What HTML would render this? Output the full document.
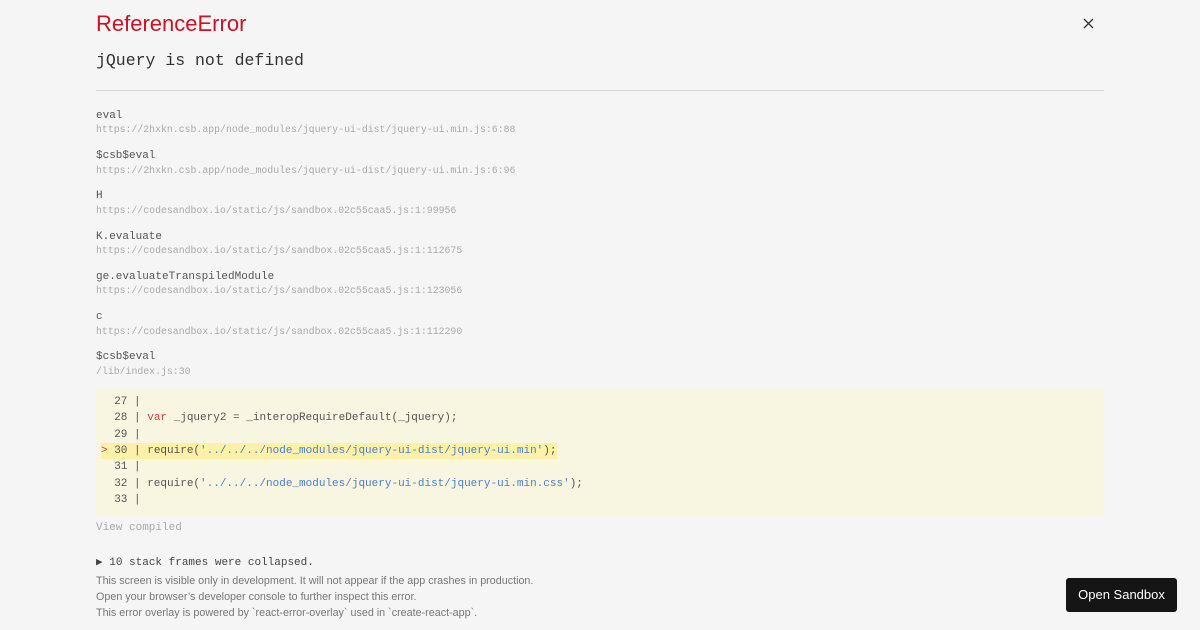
<!DOCTYPE html>
<html><head><meta charset="utf-8"><style>
*{margin:0;padding:0;box-sizing:border-box}
body{width:1200px;height:630px;background:#f5f5f5;font-family:"Liberation Sans",sans-serif;position:relative;overflow:hidden}
.m{font-family:"Liberation Mono",monospace}
.t{position:absolute;left:96px;top:11px;font-size:22px;color:#ce1126}
.msg{position:absolute;left:96px;top:51px;font-size:16.5px;color:#333}
.hr{position:absolute;left:96px;top:90px;width:1008px;height:1px;background:#d8d8d8}
.x{position:absolute;left:1083px;top:18px}
.f{position:absolute;left:96px;font-size:11px;color:#555;white-space:pre}
.u{position:absolute;left:96px;font-size:9.85px;color:#aaa;white-space:pre}
.code{position:absolute;left:96px;top:389px;width:1008px;height:127px;background:#f8f5e0}
.l{position:absolute;left:5px;font-size:11px;color:#555;white-space:pre;height:16px;line-height:16px}
.hl{background:#fbf1a9;left:5px}
.r{color:#d04040}.b{color:#4a80d0}
.vc{position:absolute;left:96px;top:522px;font-size:11px;color:#aaa}
.col{position:absolute;left:96px;top:555px;font-size:11px;color:#444;white-space:pre}
.ft{position:absolute;left:96px;font-size:10.75px;color:#777}
.btn{position:absolute;left:1066px;top:578px;width:111px;height:34px;background:#151515;color:#fff;border-radius:3px;font-size:13px;text-align:center;line-height:34px}
</style></head><body>
<div class="t">ReferenceError</div>
<div class="msg m">jQuery is not defined</div>
<svg class="x" width="11" height="11" viewBox="0 0 11 11"><path d="M1 1L10 10M10 1L1 10" stroke="#333" stroke-width="1.3"/></svg>
<div class="hr"></div>
<div class="f m" style="top:110px">eval</div><div class="u m" style="top:124px">https://2hxkn.csb.app/node_modules/jquery-ui-dist/jquery-ui.min.js:6:88</div>
<div class="f m" style="top:150px">$csb$eval</div><div class="u m" style="top:165px">https://2hxkn.csb.app/node_modules/jquery-ui-dist/jquery-ui.min.js:6:96</div>
<div class="f m" style="top:190px">H</div><div class="u m" style="top:205px">https://codesandbox.io/static/js/sandbox.02c55caa5.js:1:99956</div>
<div class="f m" style="top:231px">K.evaluate</div><div class="u m" style="top:245px">https://codesandbox.io/static/js/sandbox.02c55caa5.js:1:112675</div>
<div class="f m" style="top:271px">ge.evaluateTranspiledModule</div><div class="u m" style="top:285px">https://codesandbox.io/static/js/sandbox.02c55caa5.js:1:123056</div>
<div class="f m" style="top:311px">c</div><div class="u m" style="top:326px">https://codesandbox.io/static/js/sandbox.02c55caa5.js:1:112290</div>
<div class="f m" style="top:351px">$csb$eval</div><div class="u m" style="top:366px">/lib/index.js:30</div>
<div class="code">
<div class="l m" style="top:5px">  27 |</div>
<div class="l m" style="top:21px">  28 | <span class="r">var</span> _jquery2 = _interopRequireDefault(_jquery);</div>
<div class="l m" style="top:38px">  29 |</div>
<div class="l m hl" style="top:54px"><span class="r">&gt;</span> 30 | require(<span class="b">'../../../node_modules/jquery-ui-dist/jquery-ui.min'</span>);</div>
<div class="l m" style="top:70px">  31 |</div>
<div class="l m" style="top:87px">  32 | require(<span class="b">'../../../node_modules/jquery-ui-dist/jquery-ui.min.css'</span>);</div>
<div class="l m" style="top:103px">  33 |</div>
</div>
<div class="vc m">View compiled</div>
<div class="col m">▶ 10 stack frames were collapsed.</div>
<div class="ft" style="top:575px">This screen is visible only in development. It will not appear if the app crashes in production.</div>
<div class="ft" style="top:591px">Open your browser’s developer console to further inspect this error.</div>
<div class="ft" style="top:607px">This error overlay is powered by `react-error-overlay` used in `create-react-app`.</div>
<div class="btn">Open Sandbox</div>
</body></html>
